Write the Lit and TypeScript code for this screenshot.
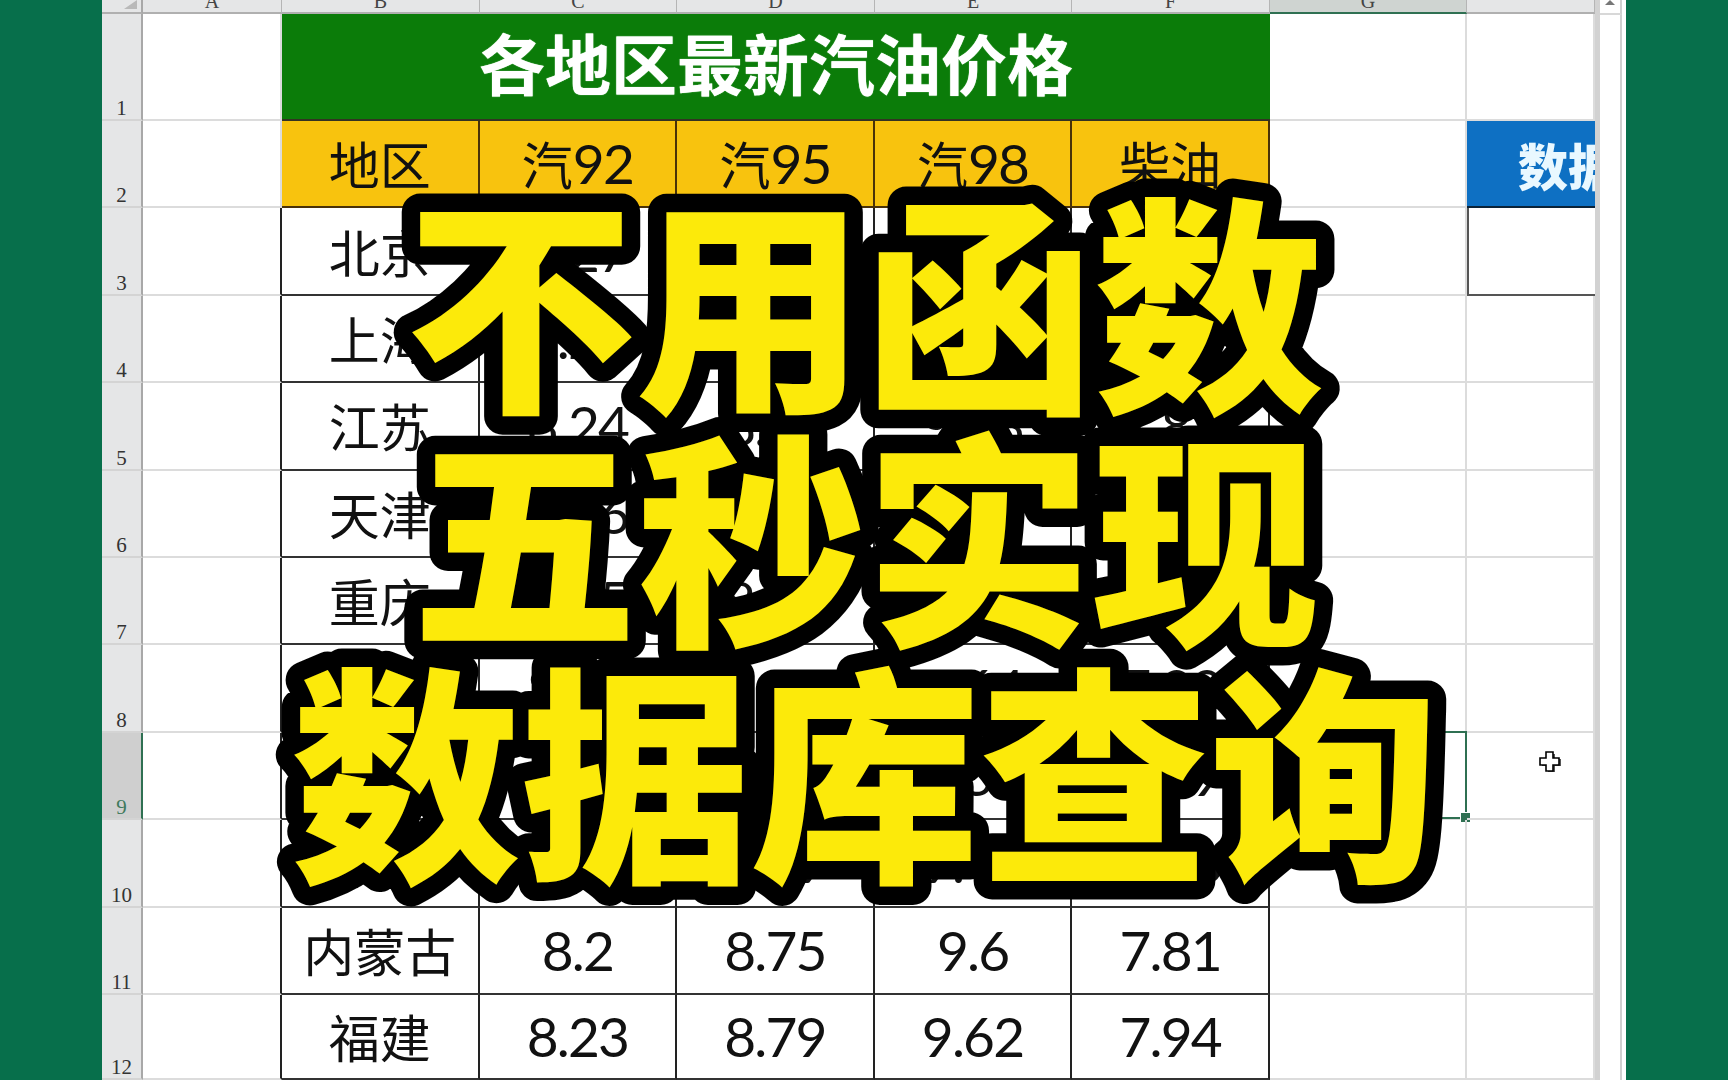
import { LitElement, html, css, svg } from "lit";
import { customElement } from "lit/decorators.js";

const COLS = ["A", "B", "C", "D", "E", "F", "G", ""];
const ROWS: [string, string, string, string, string][] = [
  ["北京", "8.27", "8.81", "9.66", "7.91"],
  ["上海", "8.23", "8.76", "9.57", "7.89"],
  ["江苏", "8.24", "8.78", "9.63", "7.88"],
  ["天津", "8.26", "8.74", "9.61", "7.87"],
  ["重庆", "8.35", "8.84", "9.52", "7.96"],
  ["广东", "8.31", "8.82", "9.64", "7.92"],
  ["山东", "8.22", "8.77", "9.58", "7.89"],
  ["浙江", "8.23", "8.79", "9.41", "7.88"],
  ["内蒙古", "8.2", "8.75", "9.6", "7.81"],
  ["福建", "8.23", "8.79", "9.62", "7.94"],
];
const HEAD = ["地区", "92", "95", "98", "柴油"];

@customElement("app-root")
export class AppRoot extends LitElement {
  static styles = css`
    :host { display: block; width: 1728px; height: 1080px; overflow: hidden; position: relative; background: #076f4b; }
    .page { display: flex; height: 1080px; padding: 0 102px; box-sizing: border-box; }
    .sheet { display: grid; width: 1493px; height: 1080px; background: #fff; overflow: hidden;
      grid-template-columns: 41px 139px repeat(5, 197.6px) 197px 128px;
      grid-template-rows: 14px 107px repeat(10, 87.4px);
      font-family: "Noto Sans CJK SC", sans-serif; color: #111; }
    .sheet > div { box-sizing: border-box; min-width: 0; }
    .colh { background: #e5e6e7; border-right: 1px solid #b5b5b5; border-bottom: 2px solid #b0b0b0;
      font: 20px/1 "Liberation Serif", serif; color: #444; text-align: center; overflow: hidden; }
    .colh span { display: block; margin-top: -9px; }
    .colh.selc { background: #cfd4d1; border-bottom: 2px solid #2f7052; }
    .corner { background: #e5e6e7; border-right: 2px solid #a8a8a8; border-bottom: 2px solid #b0b0b0; display: flex; justify-content: flex-end; }
    .corner svg { display: block; margin-right: 4px; }
    .rowh { background: #e5e6e7; border-right: 2px solid #a8a8a8; border-bottom: 2px solid #d4d4d4;
      font: 21px/1 "Liberation Serif", serif; color: #333; display: flex; align-items: flex-end; justify-content: center; }
    .rowh.selr { background: #cfcfcf; color: #3f7a5d; border-right: 2px solid #2f7052; }
    .grid { border-right: 2px solid #dcdcdc; border-bottom: 2px solid #dcdcdc; position: relative; }
    .edge { border-right: 2px solid #222; }
    .title { grid-column: span 5; background: #0b7c09; color: #fff; font-size: 66px; font-weight: 700; line-height: 1;
      display: flex; align-items: center; justify-content: center; padding-bottom: 12px; border-bottom: 2px solid #332; white-space: nowrap; text-shadow: 0 0 1px #eaffea; }
    .cell { display: flex; align-items: center; justify-content: center; white-space: nowrap; font-size: 51px; line-height: 1;
      border-right: 2px solid #222; border-bottom: 2px solid #333; }
    .head { background: #f8c30e; border-right-color: #4a3208; border-bottom-color: #4a3208; }
    .num { font-family: Lato, "Noto Sans CJK SC", sans-serif; font-size: 55px; letter-spacing: -1.8px; }
    .blue { background: #0e70c3; color: #e9f8ff; font-size: 50px; font-weight: 900; line-height: 1; white-space: nowrap; overflow: hidden;
      display: flex; align-items: center; padding-left: 51px; border-bottom: 2px solid #0a2238; }
    .box { border-left: 2px solid #555; border-bottom: 2px solid #555; border-right: none; }
    .sel { position: absolute; inset: -2px -2px -1px -2px; border: 2.5px solid #2f7052; }
    .handle { position: absolute; right: -6px; bottom: -6px; width: 9px; height: 9px; background: #2f7052; border: 1px solid #fff; }
    .bar { width: 31px; background: #fff; display: flex; flex-direction: column; border-left: 5px solid #d2d2d2; box-sizing: border-box; }
    .bar .track { flex: 1; width: 20px; border-right: 2px solid #d0d0d0; box-sizing: content-box; }
    .bar .btn { width: 20px; height: 13px; border-right: 2px solid #d0d0d0; border-bottom: 2px solid #d8d8d8; box-sizing: content-box; display: flex; justify-content: center; }
    .over { position: absolute; left: 0; top: 0; width: 1728px; height: 1080px; pointer-events: none; }
    .big { font-family: "Noto Sans CJK SC", sans-serif; font-weight: 900; fill: #fcea0a; stroke: #000; stroke-width: 37px;
      stroke-linejoin: round; paint-order: stroke fill; text-anchor: middle; }
    .l0, .l2 { font-size: 229.5px; }
    .l1 { font-size: 227px; }
  `;

  render() {
    const lines: [string, number][] = [["不用函数", 394], ["五秒实现", 629], ["数据库查询", 864]];
    return html`
      <div class="page">
        <div class="sheet">
          <div class="corner"><svg width="13" height="9"><polygon points="13,0 13,9 0,9" fill="#b9b9b9"/></svg></div>
          ${COLS.map((c, i) => html`<div class="colh ${i === 6 ? "selc" : ""}"><span>${c}</span></div>`)}

          <div class="rowh">1</div><div class="grid"></div>
          <div class="title">各地区最新汽油价格</div>
          <div class="grid"></div><div class="grid"></div>

          <div class="rowh">2</div><div class="grid"></div>
          <div class="cell head">${HEAD[0]}</div>
          ${HEAD.slice(1, 4).map((h) => html`<div class="cell head">汽<span class="num">${h}</span></div>`)}
          <div class="cell head">${HEAD[4]}</div>
          <div class="grid"></div>
          <div class="blue">数据查询</div>

          ${ROWS.map((r, i) => {
            const n = i + 3;
            return html`
              <div class="rowh ${n === 9 ? "selr" : ""}">${n}</div>
              <div class="grid edge"></div>
              <div class="cell">${r[0]}</div>
              ${r.slice(1).map((v) => html`<div class="cell"><span class="num">${v}</span></div>`)}
              <div class="grid">${n === 9 ? html`<div class="sel"><div class="handle"></div></div>` : ""}</div>
              <div class="grid ${n === 3 ? "box" : ""}"></div>
            `;
          })}
        </div>
        <div class="bar">
          <div class="btn"><svg width="10" height="5"><polygon points="5,0 10,5 0,5" fill="#777"/></svg></div>
          <div class="track"></div>
        </div>
      </div>
      <svg class="over" viewBox="0 0 1728 1080">
        ${lines.map(([t, y], i) => svg`<text class="big l${i}" x="865" y=${y}>${t}</text>`)}
        <polygon points="1548,754 1555,754 1555,759 1561,759 1561,766 1555,766 1555,772 1548,772 1548,766 1542,766 1542,759 1548,759" fill="#555"/>
        <polygon points="1546,752 1553,752 1553,758 1559,758 1559,765 1553,765 1553,771 1546,771 1546,765 1540,765 1540,758 1546,758" fill="#fff" stroke="#000" stroke-width="1.6"/>
      </svg>
    `;
  }
}
